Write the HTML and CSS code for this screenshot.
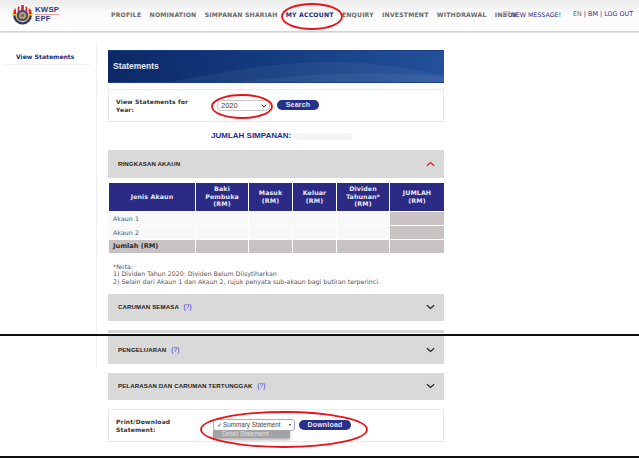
FILE: index.html
```html
<!DOCTYPE html>
<html lang="en">
<head>
<meta charset="utf-8">
<title>KWSP EPF Statements</title>
<link rel="stylesheet" href="styles.css">
</head>
<body>
<header class="topbar">
  <div class="brand">
    <svg class="logo" viewBox="0 0 24 24" width="21" height="21" aria-hidden="true">
      <circle cx="12" cy="12" r="11.5" fill="#f3c243"/>
      <path d="M1 11A11 11 0 0 1 23 11Z" fill="#fff"/>
      <path d="M1.5 11.5 2 7l2-2.500L5 11.500ZM6.500 11.500V3.500L8.500 2.200V11.500ZM10.500 11.500V1.200H13.500V11.500ZM15.500 11.500V2.200L17.500 3.500V11.500ZM19 11.500V4.500L22 7l.5 4.500Z" fill="#d9252b"/>
      <path d="M1.500 13A10.500 10.500 0 0 0 22.500 13L20 13A8 8 0 0 1 4 13Z" fill="#26337f"/>
      <circle cx="12" cy="13" r="6.500" fill="#3a4a8c"/>
      <circle cx="12" cy="13" r="4" fill="#c9a24a"/>
      <circle cx="12" cy="13" r="1.800" fill="#55608f"/>
    </svg>
    <div class="brand-text"><span class="brand-kwsp">KWSP</span><span class="brand-epf">EPF</span></div>
  </div>
  <nav class="nav">
    <a class="nav-item">PROFILE</a>
    <a class="nav-item">NOMINATION</a>
    <a class="nav-item">SIMPANAN SHARIAH</a>
    <a class="nav-item nav-active">MY ACCOUNT</a>
    <a class="nav-item">ENQUIRY</a>
    <a class="nav-item">INVESTMENT</a>
    <a class="nav-item">WITHDRAWAL</a>
    <a class="nav-item nav-inbox">INBOX</a>
  </nav>
  <svg class="msg-icon" viewBox="0 0 7 5" aria-hidden="true"><path d="M.5.5H6.500V4.500H.5ZM.5.500 3.500 3 6.500.5"/></svg>
  <span class="new-message">NEW MESSAGE!</span>
  <div class="utility"><span class="lang">EN</span> | <a>BM</a> | <a>LOG OUT</a></div>
  <svg class="ring ring-nav" viewBox="0 0 62 27" aria-hidden="true"><ellipse cx="31" cy="13.500" rx="30" ry="12.500"/></svg>
</header>

<div class="body">
  <aside class="sidebar">
    <div class="side-link">View Statements</div>
  </aside>
  <main class="main">
    <div class="banner">
      <svg class="banner-wave" viewBox="0 0 336 33" preserveAspectRatio="none" aria-hidden="true">
        <path d="M60 33C110 24 150 14 210 12S300 20 336 26V33Z" fill="#fff" fill-opacity=".05"/>
        <path d="M130 33C190 25 270 20 336 28V33Z" fill="#fff" fill-opacity=".05"/>
      </svg>
      <span class="banner-title">Statements</span>
    </div>

    <section class="filter">
      <label class="filter-label">View Statements for<br>Year:</label>
      <div class="filter-controls">
        <div class="ring-host">
          <select class="year"><option>2020</option></select>
          <svg class="year-chev" viewBox="0 0 6 4" aria-hidden="true"><path d="M.8.8 3 3 5.200.8"/></svg>
          <svg class="ring ring-year" viewBox="0 0 62 25" aria-hidden="true"><ellipse cx="31" cy="12.500" rx="30" ry="11.500"/></svg>
        </div>
        <button class="pill">Search</button>
      </div>
    </section>

    <div class="total"><span>JUMLAH SIMPANAN:</span><i class="total-blank"></i></div>

    <div class="acc">
      <span class="acc-title">RINGKASAN AKAUN</span>
      <svg class="chev" viewBox="0 0 10 6" aria-hidden="true"><path class="chev-red" d="M1 5 5 1.500 9 5"/></svg>
    </div>

    <table class="summary">
      <colgroup><col class="c1"><col class="c2"><col class="c3"><col class="c3"><col class="c2"><col class="c4"></colgroup>
      <thead>
        <tr>
          <th>Jenis Akaun</th>
          <th>Baki<br>Pembuka<br>(RM)</th>
          <th>Masuk<br>(RM)</th>
          <th>Keluar<br>(RM)</th>
          <th>Dividen<br>Tahunan*<br>(RM)</th>
          <th>JUMLAH<br>(RM)</th>
        </tr>
      </thead>
      <tbody>
        <tr class="row"><td>Akaun 1</td><td></td><td></td><td></td><td></td><td class="sum"></td></tr>
        <tr class="row"><td>Akaun 2</td><td></td><td></td><td></td><td></td><td class="sum"></td></tr>
        <tr class="row-total"><td>Jumlah (RM)</td><td></td><td></td><td></td><td></td><td></td></tr>
      </tbody>
    </table>

    <div class="notes">*Nota:<br>1) Dividen Tahun 2020: Dividen Belum Diisytiharkan<br>2) Selain dari Akaun 1 dan Akaun 2, rujuk penyata sub-akaun bagi butiran terperinci.</div>

    <div class="acc acc-caruman">
      <span class="acc-title">CARUMAN SEMASA <a class="help">(?)</a></span>
      <svg class="chev" viewBox="0 0 10 6" aria-hidden="true"><path d="M1 1 5 4.500 9 1"/></svg>
    </div>
    <div class="acc-strip"></div>
    <div class="acc">
      <span class="acc-title">PENGELUARAN <a class="help">(?)</a></span>
      <svg class="chev" viewBox="0 0 10 6" aria-hidden="true"><path d="M1 1 5 4.500 9 1"/></svg>
    </div>
    <div class="acc acc-pelarasan">
      <span class="acc-title">PELARASAN DAN CARUMAN TERTUNGGAK <a class="help">(?)</a></span>
      <svg class="chev" viewBox="0 0 10 6" aria-hidden="true"><path d="M1 1 5 4.500 9 1"/></svg>
    </div>

    <section class="download">
      <label class="filter-label filter-label-narrow">Print/Download<br>Statement:</label>
      <div class="filter-controls">
        <div class="picker">
          <div class="picker-current"><span class="tick">✓</span>Summary Statement<span class="caret"></span></div>
          <div class="picker-menu">Detail Statement</div>
        </div>
        <button class="pill pill-download">Download</button>
      </div>
      <svg class="ring ring-download" viewBox="0 0 168 37" aria-hidden="true"><ellipse cx="84" cy="18.500" rx="83" ry="17.500"/></svg>
    </section>
  </main>
</div>

<div class="seam seam-mid"></div>
<div class="seam seam-end"></div>
</body>
</html>
```

FILE: styles.css
```css
* { box-sizing: border-box; }
html, body { margin: 0; padding: 0; }
body {
  position: relative;
  width: 639px;
  height: 458px;
  overflow: hidden;
  background: #fff;
  font-family: "DejaVu Sans", sans-serif;
  color: #333;
}

/* header */
.topbar {
  position: relative;
  display: flex;
  align-items: center;
  height: 32px;
  padding-left: 12px;
  background: linear-gradient(#ececec, #fafafa 45%, #fff);
  border-bottom: 1px solid #d4d4d4;
  box-shadow: 0 1px 1px #e4e4e4;
}
.brand { display: flex; align-items: center; gap: 2px; width: 99px; flex: none; margin-top: -2px; }
.logo { flex: none; }
.brand-text { display: flex; flex-direction: column; font: 700 7.800px/8px "Liberation Sans", sans-serif; color: #2c3a8c; letter-spacing: .2px; }
.brand-kwsp { padding-bottom: .5px; border-bottom: 1px solid #e79a9a; line-height: 7.500px; }
.brand-epf { line-height: 8px; }
.nav { display: flex; gap: 8.300px; flex: none; margin-top: -2px; }
.nav-item { font-size: 6.150px; font-weight: 700; color: #6a6a6a; letter-spacing: .18px; white-space: nowrap; }
.nav-active { color: #1e2a80; }
.msg-icon { position: absolute; left: 503px; top: 11px; width: 7px; height: 5px; }
.msg-icon path { fill: none; stroke: #e2a0a0; stroke-width: .7; }
.new-message {
  position: absolute;
  left: 511px;
  top: 10px;
  font: 400 6.300px/9px "DejaVu Sans", sans-serif;
  color: #2c2f8c;
}
.utility {
  position: absolute;
  left: 573px;
  top: 10px;
  font-size: 6.400px;
  line-height: 9px;
  color: #2c2f8c;
  white-space: nowrap;
}
.lang { color: #6a6a6a; }

/* rings */
.ring { position: absolute; overflow: visible; pointer-events: none; }
.ring ellipse { fill: none; stroke: #e8141c; stroke-width: 1.800; }
.ring-nav { left: 281px; top: 3px; width: 62px; height: 27px; }
.ring-host { position: relative; display: flex; }
.ring-year { left: -6px; top: -6px; width: 62px; height: 25px; }
.ring-download { left: 91px; top: 1px; width: 168px; height: 37px; }
.year-chev { position: absolute; right: 3px; top: 4px; width: 6px; height: 4px; }
.year-chev path { fill: none; stroke: #333; stroke-width: 1; }

/* body */
.body { display: flex; align-items: flex-start; padding-top: 10px; }
.sidebar {
  flex: none;
  width: 97px;
  height: 326px;
  padding: 10px 6px 0 4px;
  border-right: 1px solid #f0f0f0;
}
.side-link {
  padding: 0 0 3px 12px;
  font-size: 6.100px;
  font-weight: 700;
  line-height: 9px;
  color: #1f2d78;
  border-bottom: 1px solid #f1f1f1;
}
.main { flex: none; width: 336px; margin: 8px 0 0 11px; }

.banner {
  position: relative;
  display: flex;
  align-items: center;
  height: 33px;
  padding-left: 5px;
  background: linear-gradient(90deg, #0d2866, #133a7d 45%, #24519c);
  border-top: 1px solid #1b3f8c;
  border-bottom: 1px solid #1b3f8c;
}
.banner-wave { position: absolute; left: 0; top: 0; width: 100%; height: 100%; }
.banner-title { position: relative; font: 700 8.500px/1 "Liberation Sans", sans-serif; color: #e8ecf6; }

.filter, .download {
  position: relative;
  display: flex;
  align-items: center;
  border: 1px solid #eaeaea;
  padding-left: 7px;
}
.filter { height: 33px; margin-top: 6px; }
.filter-label {
  flex: none;
  width: 101px;
  font-size: 6px;
  font-weight: 700;
  line-height: 8px;
  letter-spacing: .15px;
  color: #333;
}
.filter-label-narrow { width: 97px; }
.filter-controls { display: flex; align-items: center; gap: 7px; margin-top: -1px; }
.year {
  width: 53px;
  height: 11px;
  padding: 0 0 0 3px;
  font: 7.500px/9px "Liberation Sans", sans-serif;
  color: #444;
  background: #fff;
  border: 1px solid #c8c8c8;
  border-radius: 4px;
  appearance: none;
}
.pill {
  height: 10px;
  width: 42px;
  padding: 0;
  font: 700 7px/10px "Liberation Sans", sans-serif;
  letter-spacing: .2px;
  color: #e6e8f5;
  background: #27308a;
  border: 0;
  border-radius: 5px;
}

.total {
  display: flex;
  align-items: center;
  height: 28px;
  padding-left: 103px;
  font: 700 8px/1 "Liberation Sans", sans-serif;
  color: #1f2a90;
}
.total-blank { width: 58px; height: 7px; margin-left: 4px; border-radius: 4px; background: #f5f5f5; }

.acc {
  display: flex;
  align-items: center;
  justify-content: space-between;
  height: 27.500px;
  padding: 0 9px 0 10px;
  background: #d9d9d9;
}
.acc-title { font: 700 6.100px/1 "Liberation Sans", sans-serif; color: #222; letter-spacing: .12px; }
.help { margin-left: 3px; font-weight: 400; font-size: 6.500px; color: #2a2ce0; }
.chev { width: 9px; height: 6px; flex: none; }
.chev path { fill: none; stroke: #222; stroke-width: 1.300; }
.chev .chev-red { stroke: #e2161c; }

.summary {
  width: 336px;
  margin-top: 4px;
  table-layout: fixed;
  border-collapse: separate;
  border-spacing: 1px;
  font-size: 6.600px;
}
.c1 { width: 86px; } .c2 { width: 52px; } .c3 { width: 43px; } .c4 { width: 54px; }
.summary th {
  height: 28px;
  padding: 0;
  font-size: 6.300px;
  font-weight: 700;
  line-height: 7.700px;
  text-align: center;
  color: #e6e8f5;
  background: #2b2a85;
  letter-spacing: .1px;
}
.summary td { height: 13px; padding: 0 0 0 4px; }
.row td { background: #f8f8f8; color: #555; font-size: 6.200px; letter-spacing: .1px; }
.row .sum { background: #c9c2c2; }
.row-total td { background: #c9c2c2; color: #2b2b2b; font-weight: 700; }

.notes {
  margin: 9px 0 8px 5px;
  font-size: 6.270px;
  line-height: 7.700px;
  color: #555;
}
.acc-strip { height: 3px; margin: 9px 0 3px; background: #d9d9d9; }
.acc-pelarasan { margin-top: 9px; }

.download { height: 33px; margin-top: 9px; }
.picker { position: relative; width: 82px; }
.picker-current {
  display: flex;
  align-items: center;
  height: 12px;
  padding-left: 3px;
  font: 6.300px/1 "Liberation Sans", sans-serif;
  color: #444;
  white-space: nowrap;
  border: 1px solid #a6a8d0;
  border-radius: 3px;
  background: #fff;
}
.tick { margin-right: 1px; font-size: 6px; color: #222; }
.caret {
  margin-left: auto;
  margin-right: 3px;
  border-left: 1.500px solid transparent;
  border-right: 1.500px solid transparent;
  border-top: 2px solid #333;
}
.picker-menu {
  position: absolute;
  left: 0;
  top: 11px;
  width: 77px;
  height: 8px;
  padding-left: 9px;
  font: 6.300px/8px "Liberation Sans", sans-serif;
  color: #e2e2e2;
  background: #a3a3a3;
  box-shadow: 0 2px 3px rgba(0,0,0,.3);
}
.pill-download { width: 52px; height: 10px; margin-left: -3px; }

/* photo seams */
.seam { position: absolute; left: 0; width: 100%; height: 2px; background: #111; }
.seam-mid { top: 334px; }
.seam-end { top: 456px; }
```
